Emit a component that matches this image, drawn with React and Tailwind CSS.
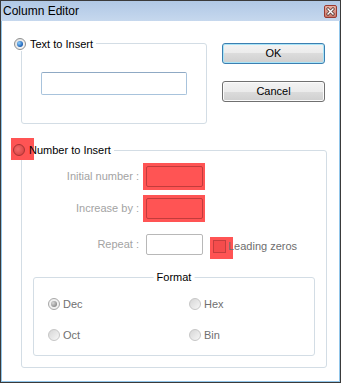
import React from 'react';

const FONT = { fontFamily: '"Liberation Sans", Arial, sans-serif' };

function Radio({ variant }) {
  if (variant === 'blue') {
    return (
      <span className="relative w-[12px] h-[12px] rounded-full border border-[#8e8f8f] bg-gradient-to-br from-[#e0e0e0] to-[#fafafa] flex items-center justify-center">
        <span className="w-[6px] h-[6px] rounded-full bg-[radial-gradient(circle_at_35%_35%,#8fd0ff,#1a5fb4_70%)]" />
      </span>
    );
  }
  if (variant === 'grayChecked') {
    return (
      <span className="w-[12px] h-[12px] rounded-full border border-[#a8a8a8] bg-[#f0f0f0] flex items-center justify-center">
        <span className="w-[6px] h-[6px] rounded-full bg-[radial-gradient(circle_at_35%_35%,#d8d8d8,#8a8a8a_75%)]" />
      </span>
    );
  }
  if (variant === 'red') {
    return (
      <span className="relative w-[12px] h-[12px] rounded-full border border-[#a83434] bg-[radial-gradient(circle_at_40%_40%,#f56a6a,#d84444_80%)]" />
    );
  }
  return (
    <span className="w-[12px] h-[12px] rounded-full border border-[#c6c6c6] bg-gradient-to-br from-[#d6d6d6] to-[#f7f7f7]" />
  );
}

function Button({ children, primary }) {
  return (
    <div
      className={`w-[103px] h-[21px] rounded-[3px] border flex items-center justify-center text-[11px] text-black bg-[linear-gradient(#f3f3f3_0%,#ebebeb_50%,#dcdcdc_50%,#cfcfcf_100%)] ${
        primary
          ? 'border-[#3c7fb1] shadow-[inset_0_0_0_1px_#a9e4f7]'
          : 'border-[#707070] shadow-[inset_0_0_0_1px_#fbfbfb]'
      }`}
    >
      {children}
    </div>
  );
}

function RedField() {
  return (
    <div className="ml-[4px] w-[62px] h-[27px] bg-[#ff5454] pl-[3px] pt-[3px]">
      <div className="w-[57px] h-[21px] rounded-[2px] border border-[#c23c3c]" />
    </div>
  );
}

function FormatOption({ label, checked }) {
  return (
    <div className="flex items-center h-[12px]">
      <Radio variant={checked ? 'grayChecked' : 'gray'} />
      <span className="ml-[3px] text-[11px] text-[#707070]">{label}</span>
    </div>
  );
}

export default function App() {
  return (
    <div className="w-[341px] h-[383px] border border-[#3a3a3a] flex flex-col bg-white" style={FONT}>
      <div className="h-[20px] flex items-center justify-between pl-[2px] pr-[3px] bg-gradient-to-b from-[#b0c8e5] to-[#c6d8ee]">
        <span className="text-[12px] text-black">Column Editor</span>
        <div className="w-[13px] h-[13px] mt-[1px] rounded-[2px] border border-[#9a3a30] bg-gradient-to-b from-[#eab0a2] to-[#c9776a] flex items-center justify-center">
          <svg width="9" height="9" viewBox="0 0 9 9">
            <path d="M2 2 L7 7 M7 2 L2 7" stroke="#5a3a36" strokeWidth="3" strokeLinecap="square" />
            <path d="M2 2 L7 7 M7 2 L2 7" stroke="#ffffff" strokeWidth="1.4" strokeLinecap="square" />
          </svg>
        </div>
      </div>

      <div className="flex-1 border-x border-b border-[#92c6ea] pl-[19px] pt-[22px]">
        <div className="flex items-start">
          <div className="relative w-[186px] h-[81px] rounded-[3px] border border-[#d3dde5]">
            <div className="absolute left-[-8px] top-[-7px] h-[14px] flex items-center bg-white pr-[3px]">
              <Radio variant="blue" />
              <span className="ml-[4px] text-[11px] text-black">Text to Insert</span>
            </div>
            <div className="ml-[19px] mt-[28px] w-[146px] h-[23px] rounded-[2px] border border-[#a8c3dc] border-t-[#8fa9c4]" />
          </div>
          <div className="ml-[15px] flex flex-col gap-[17px]">
            <Button primary>OK</Button>
            <Button>Cancel</Button>
          </div>
        </div>

        <div className="relative mt-[26px] w-[306px] h-[218px] rounded-[3px] border border-[#d3dde5]">
          <div className="absolute left-[-9px] top-[-8px] h-[14px] flex items-center bg-white pr-[3px]">
            <span className="relative flex">
              <span className="absolute left-[-2px] top-[-6px] w-[23px] h-[22px] bg-[#ff5454]" />
              <Radio variant="red" />
            </span>
            <span className="relative ml-[4px] text-[11px] text-black">Number to Insert</span>
          </div>

          <div className="mt-[12px] flex items-start">
            <span className="w-[117px] h-[27px] flex items-center justify-end text-[11px] text-[#a3a3a3]">Initial number :</span>
            <RedField />
          </div>
          <div className="mt-[5px] flex items-start">
            <span className="w-[117px] h-[27px] flex items-center justify-end text-[11px] text-[#a3a3a3]">Increase by :</span>
            <RedField />
          </div>
          <div className="mt-[12px] h-[22px] flex items-start">
            <span className="w-[117px] h-[21px] flex items-center justify-end text-[11px] text-[#a3a3a3]">Repeat :</span>
            <div className="ml-[7px] w-[57px] h-[21px] rounded-[2px] border border-[#b8b8b8]" />
            <div className="ml-[10px] mt-[4px] flex items-center">
              <span className="relative flex">
                <span className="absolute left-[-3px] top-[-3px] w-[23px] h-[22px] bg-[#ff5454]" />
                <span className="relative w-[13px] h-[13px] border border-[#c43e3e] bg-[#f44c4c]" />
              </span>
              <span className="relative ml-[2px] text-[11px] text-[#6e6e6e]">Leading zeros</span>
            </div>
          </div>

          <div className="relative mt-[21px] ml-[11px] w-[282px] h-[79px] rounded-[3px] border border-[#d3dde5] pl-[14px] pt-[20px]">
            <span className="absolute left-1/2 -translate-x-1/2 top-[-8px] bg-white px-[3px] text-[11px] leading-[14px] text-black">Format</span>
            <div className="flex">
              <div className="w-[141px]"><FormatOption label="Dec" checked /></div>
              <FormatOption label="Hex" />
            </div>
            <div className="flex mt-[19px]">
              <div className="w-[141px]"><FormatOption label="Oct" /></div>
              <FormatOption label="Bin" />
            </div>
          </div>
        </div>
      </div>
    </div>
  );
}
